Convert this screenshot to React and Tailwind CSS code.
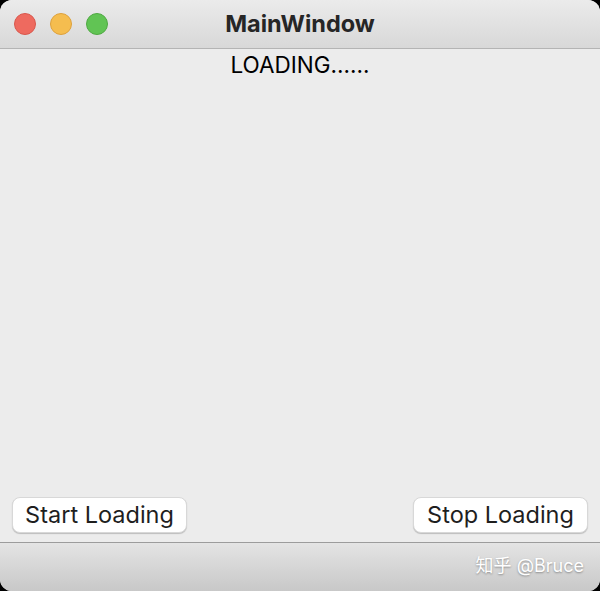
export default function App() {
  return (
    <div className="w-[600px] h-[591px] bg-black" style={{ fontFamily: "Inter, 'Noto Sans CJK SC', sans-serif" }}>
      <div className="w-full h-full rounded-[12px] overflow-hidden flex flex-col bg-[#ececec]">
        {/* title bar */}
        <div className="relative h-[49px] shrink-0 bg-gradient-to-b from-[#ebebeb] to-[#d8d8d8] border-b border-[#b4b4b4] flex items-center justify-center">
          <div className="absolute left-[14px] top-[13px] flex gap-[14px]">
            <div className="w-[22px] h-[22px] rounded-full bg-[#ee6a5f] border border-[#d9574c]" />
            <div className="w-[22px] h-[22px] rounded-full bg-[#f5bd4f] border border-[#dea13c]" />
            <div className="w-[22px] h-[22px] rounded-full bg-[#61c454] border border-[#4fa942]" />
          </div>
          <span className="text-[23.5px] font-bold text-[#262626]">MainWindow</span>
        </div>

        {/* body */}
        <div className="flex-1 flex flex-col">
          <div className="text-center text-[22.5px] text-black leading-none pt-[5px]">LOADING......</div>
          <div className="flex-1" />
          <div className="flex justify-between px-[12px] pb-[9px]">
            <button className="w-[175px] h-[36px] bg-white rounded-[8px] border border-[#d8d8d8] shadow-[0_1px_1px_rgba(0,0,0,0.2)] text-[23.5px] text-[#1e1e1e] leading-none">
              Start Loading
            </button>
            <button className="w-[175px] h-[36px] bg-white rounded-[8px] border border-[#d8d8d8] shadow-[0_1px_1px_rgba(0,0,0,0.2)] text-[23.5px] text-[#1e1e1e] leading-none">
              Stop Loading
            </button>
          </div>
        </div>

        {/* status bar */}
        <div className="h-[49px] shrink-0 border-t border-[#9c9c9c] bg-gradient-to-b from-[#e4e4e4] to-[#c8c8c8] flex items-center justify-end pr-[16px] pb-[3px]">
          <span className="text-[18px] text-white [text-shadow:0_1px_2px_rgba(0,0,0,0.35)]">知乎 @Bruce</span>
        </div>
      </div>
    </div>
  );
}
